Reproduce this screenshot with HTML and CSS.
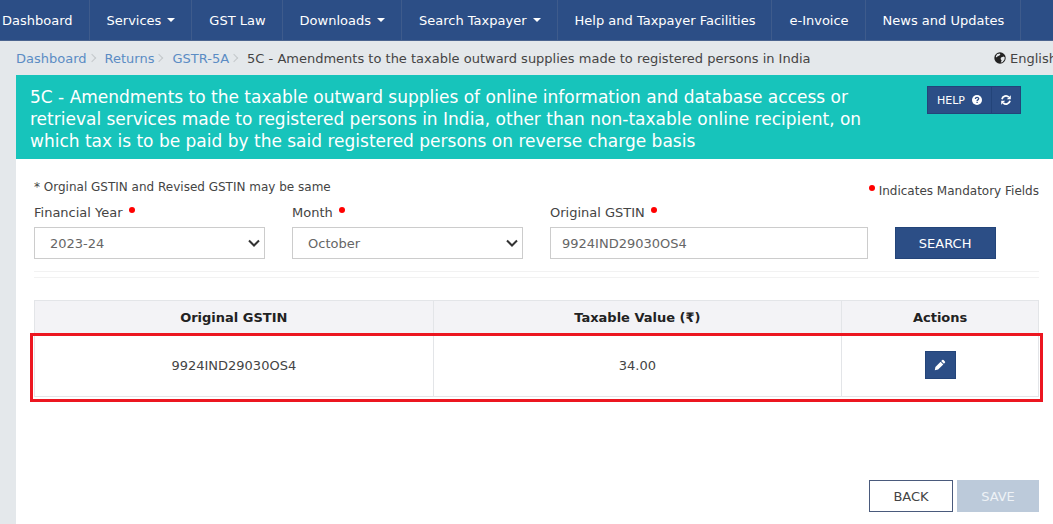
FILE: index.html
```
<!DOCTYPE html>
<html lang="en">
<head>
    <meta charset="UTF-8">
    <meta name="viewport" content="width=device-width, initial-scale=1">
    <title>GSTR-5A - 5C Amendments</title>
    <link rel="stylesheet" href="styles.css">
</head>
<body>
<nav class="navbar">
    <a href="#">Dashboard</a>
    <a href="#">Services <span class="caret"></span></a>
    <a href="#">GST Law</a>
    <a href="#">Downloads <span class="caret"></span></a>
    <a href="#">Search Taxpayer <span class="caret"></span></a>
    <a href="#">Help and Taxpayer Facilities</a>
    <a href="#">e-Invoice</a>
    <a href="#">News and Updates</a>
</nav>

<div class="topbar">
    <ol class="breadcrumb">
        <li><a href="#">Dashboard</a></li>
        <li><a href="#">Returns</a></li>
        <li><a href="#">GSTR-5A</a></li>
        <li>5C - Amendments to the taxable outward supplies made to registered persons in India</li>
    </ol>
    <button type="button" class="lang">
        <svg width="12" height="12" viewBox="0 0 12 12" aria-hidden="true">
            <circle cx="6" cy="6" r="5.7" fill="#222"/>
            <path d="M3 2.2 5.6 1.4 6.4 2.4 5.4 3.4 4.4 4 3.4 4.6 2.4 5.4 1.8 4.6Z" fill="#e4e8eb"/>
            <path d="M7 5.4 9.6 4.4 10.8 5.4 10.4 7.8 8.4 10.2 6.8 10.6 7.6 8.4 6.6 7Z" fill="#e4e8eb"/>
        </svg>
        English
    </button>
</div>

<main class="panel">
    <header class="panel-head">
        <h1>5C - Amendments to the taxable outward supplies of online information and database access or retrieval services made to registered persons in India, other than non-taxable online recipient, on which tax is to be paid by the said registered persons on reverse charge basis</h1>
        <div class="head-btns">
            <button type="button">HELP
                <svg width="10" height="10" viewBox="0 0 10 10" aria-hidden="true">
                    <circle cx="5" cy="5" r="5" fill="#fff"/>
                    <path d="M3.4 3.9C3.4 1.9 6.7 2 6.7 3.8 6.7 4.9 5.1 4.9 5.1 6M5.1 6.8V8" fill="none" stroke="#2c4e86" stroke-width="1.3"/>
                </svg>
            </button>
            <button type="button" aria-label="Refresh">
                <svg width="10" height="10" viewBox="0 0 10 10" aria-hidden="true">
                    <path d="M1 4.2A4 4 0 0 1 7.8 2.2M9 5.8A4 4 0 0 1 2.2 7.8" fill="none" stroke="#fff" stroke-width="1.8"/>
                    <path d="M9.8.2V4.2H5.8ZM.2 9.8V5.8H4.2Z" fill="#fff"/>
                </svg>
            </button>
        </div>
    </header>

    <div class="panel-body">
        <div class="notes">
            <p>* Orginal GSTIN and Revised GSTIN may be same</p>
            <p class="mandatory"><span class="dot"></span>Indicates Mandatory Fields</p>
        </div>

        <form class="filters">
            <div class="field">
                <label for="year">Financial Year <span class="dot"></span></label>
                <div class="select">
                    <select id="year"><option>2023-24</option></select>
                    <svg width="12" height="8" viewBox="0 0 12 8" aria-hidden="true"><path d="M1 1.5 6 6.5 11 1.5" fill="none" stroke="#333" stroke-width="2"/></svg>
                </div>
            </div>
            <div class="field">
                <label for="month">Month <span class="dot"></span></label>
                <div class="select">
                    <select id="month"><option>October</option></select>
                    <svg width="12" height="8" viewBox="0 0 12 8" aria-hidden="true"><path d="M1 1.5 6 6.5 11 1.5" fill="none" stroke="#333" stroke-width="2"/></svg>
                </div>
            </div>
            <div class="field">
                <label for="gstin">Original GSTIN <span class="dot"></span></label>
                <input type="text" id="gstin" value="9924IND29030OS4">
            </div>
            <button type="button" class="btn search">SEARCH</button>
        </form>

        <hr>

        <div class="table-wrap">
            <table>
                <thead>
                <tr>
                    <th class="col-gstin">Original GSTIN</th>
                    <th class="col-value">Taxable Value (₹)</th>
                    <th>Actions</th>
                </tr>
                </thead>
                <tbody>
                <tr>
                    <td>9924IND29030OS4</td>
                    <td>34.00</td>
                    <td>
                        <button type="button" class="edit" aria-label="Edit">
                            <svg width="12" height="12" viewBox="0 0 12 12" aria-hidden="true">
                                <path d="M.8 11.2 1.4 7.9 6.6 2.7 9.3 5.4 4.1 10.6ZM7.2 2.1 8.2 1.1Q8.9.5 9.6 1.1L10.9 2.4Q11.5 3.1 10.9 3.8L9.9 4.8Z" fill="#fff"/>
                            </svg>
                        </button>
                    </td>
                </tr>
                </tbody>
            </table>
            <div class="highlight"></div>
        </div>

        <div class="footer-btns">
            <button type="button" class="btn back">BACK</button>
            <button type="button" class="btn save" disabled>SAVE</button>
        </div>
    </div>
</main>
</body>
</html>
```
FILE: styles.css
```
*{
    box-sizing: border-box;
}
body{
    margin: 0;
    min-height: 100vh;
    display: flex;
    flex-direction: column;
    background: #e4e8eb;
    color: #444;
    font-family: Verdana, "DejaVu Sans", sans-serif;
    font-size: 13px;
    overflow: hidden;
}
button, input, select{
    font: inherit;
}
a{
    text-decoration: none;
}

/* navigation */
.navbar{
    display: flex;
    height: 41px;
    background: #2c4e86;
    border-bottom: 1px solid #4b648f;
}
.navbar a{
    display: flex;
    align-items: center;
    padding: 0 16px 0 17px;
    border-right: 1px solid #3e5b8c;
    color: #fff;
    white-space: nowrap;
}
.navbar a:first-child{
    padding-left: 2px;
}
.caret{
    margin-left: 6px;
    border: 4px solid transparent;
    border-top-color: #fff;
    border-bottom: 0;
}

/* breadcrumb and language */
.topbar{
    display: flex;
    justify-content: space-between;
    align-items: center;
    height: 34px;
    margin-right: -4px;
    padding-left: 16px;
    white-space: nowrap;
}
.breadcrumb{
    display: flex;
    margin: 0;
    padding: 0;
    list-style: none;
}
.breadcrumb li{
    display: flex;
    align-items: center;
}
.breadcrumb li + li::before{
    content: "";
    width: 5px;
    height: 5px;
    margin: 0 10px 0 2px;
    border: solid #c4c8cb;
    border-width: 1px 1px 0 0;
    transform: rotate(45deg);
}
.breadcrumb a{
    color: #5b8cc4;
}
.lang{
    display: flex;
    align-items: center;
    gap: 4px;
    padding: 0;
    border: 0;
    background: none;
    color: #444;
}

/* panel */
.panel{
    flex: 1;
    margin-left: 16px;
    background: #fff;
}
.panel-head{
    display: flex;
    justify-content: space-between;
    align-items: flex-start;
    padding: 11px 32px 7px 14px;
    background: #17c4bb;
}
.panel-head h1{
    flex: 0 1 850px;
    margin: 0;
    color: #fff;
    font-size: 17px;
    font-weight: normal;
    line-height: 22px;
}
.head-btns{
    display: flex;
}
.head-btns button{
    display: flex;
    align-items: center;
    gap: 7px;
    height: 28px;
    padding: 0 9px;
    border: 1px solid #234479;
    background: #2c4e86;
    color: #fff;
    font-size: 11px;
}
.head-btns button + button{
    border-left: 0;
}
.panel-body{
    padding: 18px 14px 12px 18px;
}
.notes{
    display: flex;
    justify-content: space-between;
    margin-bottom: 2px;
    font-size: 12px;
    line-height: 20px;
}
.notes p{
    margin: 0;
}
.notes .mandatory{
    padding-top: 4px;
}
.dot{
    display: inline-block;
    width: 6px;
    height: 6px;
    margin: 0 4px 0 2px;
    border-radius: 50%;
    background: #f00;
    vertical-align: 4px;
}

/* filters */
.filters{
    display: grid;
    grid-template-columns: 8fr 8fr 11fr 5fr;
    gap: 27px;
    align-items: end;
}
.field label{
    display: block;
    margin-bottom: 4px;
    line-height: 20px;
}
.field input, .field select{
    display: block;
    width: 100%;
    height: 32px;
    padding: 0 11px;
    border: 1px solid #ccc;
    background: #fff;
    color: #666;
}
.select{
    position: relative;
}
.field select{
    padding-left: 15px;
    appearance: none;
}
.select svg{
    position: absolute;
    right: 5px;
    top: 12px;
    pointer-events: none;
}
.btn{
    height: 32px;
    border: 1px solid #234479;
}
.search{
    width: 101px;
    background: #2c4e86;
    color: #fff;
}
hr{
    height: 7px;
    margin: 12px 0 22px;
    border: solid #f2f2f2;
    border-width: 1px 0;
}

/* table */
.table-wrap{
    position: relative;
}
table{
    width: 100%;
    border-collapse: collapse;
    table-layout: fixed;
}
th, td{
    padding: 0;
    border: 1px solid #e3e5e8;
    text-align: center;
}
th{
    height: 33px;
    background: #f3f3f6;
    color: #222;
}
td{
    height: 63px;
}
.col-gstin{
    width: 39.7%;
}
.col-value{
    width: 40.7%;
}
.edit{
    display: inline-flex;
    align-items: center;
    justify-content: center;
    width: 31px;
    height: 28px;
    border: 1px solid #234479;
    background: #2c4e86;
    vertical-align: middle;
}
/* frame round the saved record */
.highlight{
    position: absolute;
    top: 33px;
    right: -4px;
    bottom: -5px;
    left: -4px;
    border: 3px solid #ec1620;
    pointer-events: none;
}

.footer-btns{
    display: flex;
    justify-content: flex-end;
    gap: 4px;
    margin-top: 83px;
}
.back{
    width: 84px;
    border-color: #4a5a7c;
    background: #fff;
    color: #444;
}
.save{
    width: 82px;
    border-color: #bccada;
    background: #bccada;
    color: #eef2f6;
}
```
